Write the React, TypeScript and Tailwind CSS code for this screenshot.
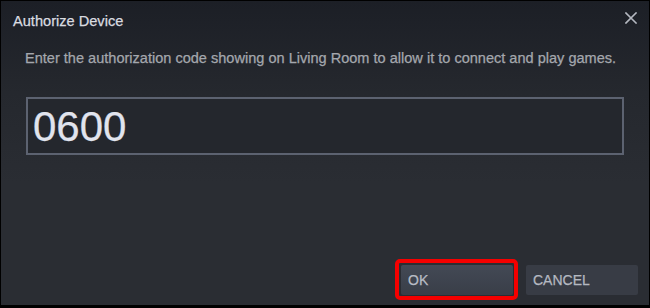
import React from "react";

export default function App() {
  return (
    <div className="w-[650px] h-[308px] bg-black pt-px pl-px pr-px pb-[3px]" style={{ fontFamily: '"Liberation Sans", Arial, sans-serif' }}>
      <div className="relative w-full h-full flex flex-col bg-[linear-gradient(to_bottom,#1c1f26_0%,#25282e_30%,#2a2d33_60%,#2a2d33_100%)] [-webkit-text-stroke:0.25px_currentColor]">
        <div className="flex items-center justify-between pl-[12px] pr-[12px] pt-[11px] h-[28px]">
          <div className="text-[14.6px] leading-[16px] text-[#dadce0]">Authorize Device</div>
          <svg width="12" height="12" viewBox="0 0 12 12" className="mt-[-5px]">
            <path d="M1 1 L11 11 M11 1 L1 11" stroke="#b4b8c0" strokeWidth="1.6" strokeLinecap="square" />
          </svg>
        </div>
        <div className="pl-[24px] pt-[21px] text-[14.55px] leading-[16px] text-[#a4a7ad]">
          Enter the authorization code showing on Living Room to allow it to connect and play games.
        </div>
        <div className="ml-[25px] mt-[31px] w-[598px] h-[58px] border-2 border-[#5c6270] bg-[#24272d] flex items-center pl-[5px]">
          <span className="text-[42px] leading-none text-[#e1e4ee] mt-[1px]">0600</span>
        </div>
        <div className="flex-1" />
        <div className="flex justify-end gap-[13px] pr-[11px] pb-[10px]">
          <div className="relative w-[112px] h-[30px]">
            <div className="w-full h-full rounded-[2px] bg-[linear-gradient(to_bottom,#434955,#393e48)] flex items-center pl-[7px] text-[14px] text-[#b8bcc4]">OK</div>
            <div className="absolute left-[-6px] top-[-6px] right-[-5px] bottom-[-5px] border-[4px] border-[#f50000] rounded-[5px]" />
          </div>
          <div className="w-[112px] h-[30px] rounded-[2px] bg-[#383c45] flex items-center pl-[7px] text-[14px] text-[#b4b8c0]">CANCEL</div>
        </div>
      </div>
    </div>
  );
}
